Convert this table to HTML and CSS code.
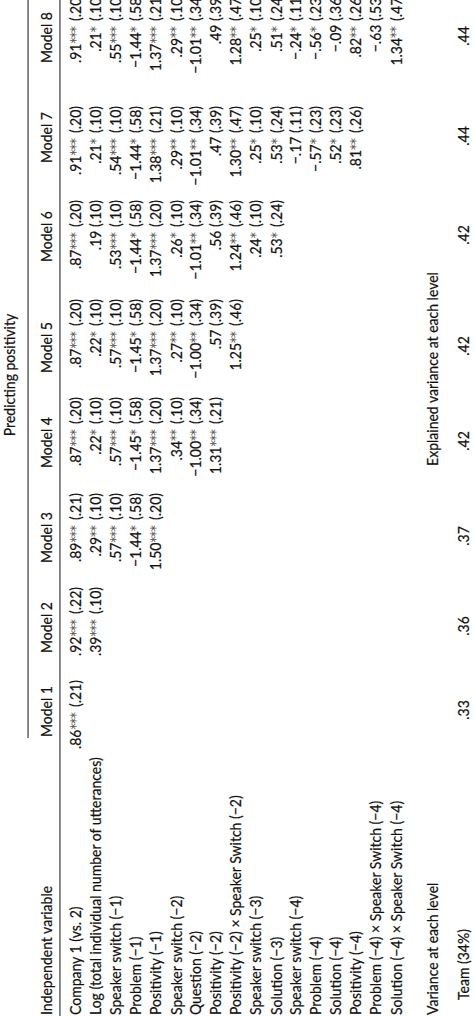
FILE: index.html
```html
<!DOCTYPE html>
<html lang="en">
<head>
<meta charset="utf-8">
<title>Predicting positivity</title>
<link rel="stylesheet" href="styles.css">
</head>
<body>
<div class="page">
  <div class="table">
    <div class="row title-row">
      <div class="label"></div>
      <div class="span-title">Predicting positivity</div>
    </div>
    <div class="row head-row">
      <div class="label">Independent variable</div>
      <div class="hd">Model 1</div>
      <div class="hd">Model 2</div>
      <div class="hd">Model 3</div>
      <div class="hd">Model 4</div>
      <div class="hd">Model 5</div>
      <div class="hd">Model 6</div>
      <div class="hd">Model 7</div>
      <div class="hd">Model 8</div>
    </div>
    <div class="body">
      <div class="row data">
        <div class="label">Company 1 (vs. 2)</div>
        <div class="v">.86<span class="st">***</span> (.21)</div>
        <div class="v">.92<span class="st">***</span> (.22)</div>
        <div class="v">.89<span class="st">***</span> (.21)</div>
        <div class="v">.87<span class="st">***</span> (.20)</div>
        <div class="v">.87<span class="st">***</span> (.20)</div>
        <div class="v">.87<span class="st">***</span> (.20)</div>
        <div class="v">.91<span class="st">***</span> (.20)</div>
        <div class="v">.91<span class="st">***</span> (.20)</div>
      </div>
      <div class="row data">
        <div class="label">Log (total individual number of utterances)</div>
        <div class="v"></div>
        <div class="v">.39<span class="st">***</span> (.10)</div>
        <div class="v">.29<span class="st">**</span> (.10)</div>
        <div class="v">.22<span class="st">*</span> (.10)</div>
        <div class="v">.22<span class="st">*</span> (.10)</div>
        <div class="v">.19 (.10)</div>
        <div class="v">.21<span class="st">*</span> (.10)</div>
        <div class="v">.21<span class="st">*</span> (.10)</div>
      </div>
      <div class="row data">
        <div class="label">Speaker switch (−1)</div>
        <div class="v"></div>
        <div class="v"></div>
        <div class="v">.57<span class="st">***</span> (.10)</div>
        <div class="v">.57<span class="st">***</span> (.10)</div>
        <div class="v">.57<span class="st">***</span> (.10)</div>
        <div class="v">.53<span class="st">***</span> (.10)</div>
        <div class="v">.54<span class="st">***</span> (.10)</div>
        <div class="v">.55<span class="st">***</span> (.10)</div>
      </div>
      <div class="row data">
        <div class="label">Problem (−1)</div>
        <div class="v"></div>
        <div class="v"></div>
        <div class="v">−1.44<span class="st">*</span> (.58)</div>
        <div class="v">−1.45<span class="st">*</span> (.58)</div>
        <div class="v">−1.45<span class="st">*</span> (.58)</div>
        <div class="v">−1.44<span class="st">*</span> (.58)</div>
        <div class="v">−1.44<span class="st">*</span> (.58)</div>
        <div class="v">−1.44<span class="st">*</span> (.58)</div>
      </div>
      <div class="row data">
        <div class="label">Positivity (−1)</div>
        <div class="v"></div>
        <div class="v"></div>
        <div class="v">1.50<span class="st">***</span> (.20)</div>
        <div class="v">1.37<span class="st">***</span> (.20)</div>
        <div class="v">1.37<span class="st">***</span> (.20)</div>
        <div class="v">1.37<span class="st">***</span> (.20)</div>
        <div class="v">1.38<span class="st">***</span> (.21)</div>
        <div class="v">1.37<span class="st">***</span> (.21)</div>
      </div>
      <div class="row data">
        <div class="label">Speaker switch (−2)</div>
        <div class="v"></div>
        <div class="v"></div>
        <div class="v"></div>
        <div class="v">.34<span class="st">**</span> (.10)</div>
        <div class="v">.27<span class="st">**</span> (.10)</div>
        <div class="v">.26<span class="st">*</span> (.10)</div>
        <div class="v">.29<span class="st">**</span> (.10)</div>
        <div class="v">.29<span class="st">**</span> (.10)</div>
      </div>
      <div class="row data">
        <div class="label">Question (−2)</div>
        <div class="v"></div>
        <div class="v"></div>
        <div class="v"></div>
        <div class="v">−1.00<span class="st">**</span> (.34)</div>
        <div class="v">−1.00<span class="st">**</span> (.34)</div>
        <div class="v">−1.01<span class="st">**</span> (.34)</div>
        <div class="v">−1.01<span class="st">**</span> (.34)</div>
        <div class="v">−1.01<span class="st">**</span> (.34)</div>
      </div>
      <div class="row data">
        <div class="label">Positivity (−2)</div>
        <div class="v"></div>
        <div class="v"></div>
        <div class="v"></div>
        <div class="v">1.31<span class="st">***</span> (.21)</div>
        <div class="v">.57 (.39)</div>
        <div class="v">.56 (.39)</div>
        <div class="v">.47 (.39)</div>
        <div class="v">.49 (.39)</div>
      </div>
      <div class="row data">
        <div class="label">Positivity (−2) × Speaker Switch (−2)</div>
        <div class="v"></div>
        <div class="v"></div>
        <div class="v"></div>
        <div class="v"></div>
        <div class="v">1.25<span class="st">**</span> (.46)</div>
        <div class="v">1.24<span class="st">**</span> (.46)</div>
        <div class="v">1.30<span class="st">**</span> (.47)</div>
        <div class="v">1.28<span class="st">**</span> (.47)</div>
      </div>
      <div class="row data">
        <div class="label">Speaker switch (−3)</div>
        <div class="v"></div>
        <div class="v"></div>
        <div class="v"></div>
        <div class="v"></div>
        <div class="v"></div>
        <div class="v">.24<span class="st">*</span> (.10)</div>
        <div class="v">.25<span class="st">*</span> (.10)</div>
        <div class="v">.25<span class="st">*</span> (.10)</div>
      </div>
      <div class="row data">
        <div class="label">Solution (−3)</div>
        <div class="v"></div>
        <div class="v"></div>
        <div class="v"></div>
        <div class="v"></div>
        <div class="v"></div>
        <div class="v">.53<span class="st">*</span> (.24)</div>
        <div class="v">.53<span class="st">*</span> (.24)</div>
        <div class="v">.51<span class="st">*</span> (.24)</div>
      </div>
      <div class="row data">
        <div class="label">Speaker switch (−4)</div>
        <div class="v"></div>
        <div class="v"></div>
        <div class="v"></div>
        <div class="v"></div>
        <div class="v"></div>
        <div class="v"></div>
        <div class="v">−.17 (.11)</div>
        <div class="v">−.24<span class="st">*</span> (.11)</div>
      </div>
      <div class="row data">
        <div class="label">Problem (−4)</div>
        <div class="v"></div>
        <div class="v"></div>
        <div class="v"></div>
        <div class="v"></div>
        <div class="v"></div>
        <div class="v"></div>
        <div class="v">−.57<span class="st">*</span> (.23)</div>
        <div class="v">−.56<span class="st">*</span> (.23)</div>
      </div>
      <div class="row data">
        <div class="label">Solution (−4)</div>
        <div class="v"></div>
        <div class="v"></div>
        <div class="v"></div>
        <div class="v"></div>
        <div class="v"></div>
        <div class="v"></div>
        <div class="v">.52<span class="st">*</span> (.23)</div>
        <div class="v">−.09 (.36)</div>
      </div>
      <div class="row data">
        <div class="label">Positivity (−4)</div>
        <div class="v"></div>
        <div class="v"></div>
        <div class="v"></div>
        <div class="v"></div>
        <div class="v"></div>
        <div class="v"></div>
        <div class="v">.81<span class="st">**</span> (.26)</div>
        <div class="v">.82<span class="st">**</span> (.26)</div>
      </div>
      <div class="row data">
        <div class="label">Problem (−4) × Speaker Switch (−4)</div>
        <div class="v"></div>
        <div class="v"></div>
        <div class="v"></div>
        <div class="v"></div>
        <div class="v"></div>
        <div class="v"></div>
        <div class="v"></div>
        <div class="v">−.63 (.53)</div>
      </div>
      <div class="row data">
        <div class="label">Solution (−4) × Speaker Switch (−4)</div>
        <div class="v"></div>
        <div class="v"></div>
        <div class="v"></div>
        <div class="v"></div>
        <div class="v"></div>
        <div class="v"></div>
        <div class="v"></div>
        <div class="v">1.34<span class="st">**</span> (.47)</div>
      </div>
    </div>
    <div class="row var-row">
      <div class="label">Variance at each level</div>
      <div class="span-sub">Explained variance at each level</div>
    </div>
    <div class="row team-row">
      <div class="label indent">Team (34%)</div>
      <div class="bv">.33</div>
      <div class="bv">.36</div>
      <div class="bv">.37</div>
      <div class="bv">.42</div>
      <div class="bv">.42</div>
      <div class="bv">.42</div>
      <div class="bv">.44</div>
      <div class="bv">.44</div>
    </div>
  </div>
</div>
</body>
</html>
```

FILE: styles.css
```css
html, body {
  margin: 0;
  padding: 0;
  background: #ffffff;
  overflow: hidden;
}

body {
  width: 474px;
  height: 1016px;
  font-family: "Lato", "Open Sans", "DejaVu Sans", sans-serif;
  font-size: 14px;
  color: #111111;
}

/* the printed table is set sideways (rotated 90° counter-clockwise)
   and its glyphs are slightly stretched across the rows */
.page {
  width: 1016px;
  height: 431px;
  transform-origin: 0 0;
  transform: translateY(1016px) rotate(-90deg) scaleY(1.1);
  overflow: hidden;
}

.table {
  width: 1022px;
  display: flex;
  flex-direction: column;
  -webkit-text-stroke: 0.2px #111111;
}

.row {
  display: grid;
  grid-template-columns: 250px 86px 93px 94px 96px 98px 99px 94px 112px;
  line-height: 18.18px;
  white-space: nowrap;
}

.label {
  padding-left: 1px;
}

.indent {
  padding-left: 16px;
}

/* spanning title over the model columns */
.title-row {
  height: 24.5px;
}

.span-title {
  grid-column: 2 / -1;
  margin-left: 28px;
  padding-right: 18px;
  text-align: center;
  border-bottom: 1px solid #2a2a2a;
  height: 24.5px;
}

.head-row {
  padding-top: 8.1px;
  padding-bottom: 3.7px;
  border-bottom: 1.3px solid #2a2a2a;
}

.row > :nth-child(2) { --hl: 29px; }
.row > :nth-child(3) { --hl: 27px; }
.row > :nth-child(4) { --hl: 24px; }
.row > :nth-child(5) { --hl: 25px; }
.row > :nth-child(6) { --hl: 24px; }
.row > :nth-child(7) { --hl: 37px; }
.row > :nth-child(8) { --hl: 37px; }
.row > :nth-child(9) { --hl: 43px; }

.hd {
  text-align: left;
  padding-left: var(--hl);
}

.body {
  padding-top: 4.2px;
}

.v {
  display: flex;
  justify-content: flex-end;
  white-space: pre;
}

.st {
  font-family: "DejaVu Sans", sans-serif;
  font-size: 12.5px;
  color: #555555;
  -webkit-text-stroke: 0;
  letter-spacing: -0.6px;
  margin-right: 2px;
}

.var-row {
  margin-top: 15.4px;
}

.span-sub {
  grid-column: 2 / -1;
  margin-left: 28px;
  padding-right: 6px;
  text-align: center;
}

.team-row {
  margin-top: 10px;
}

.bv {
  margin-left: var(--hl);
  width: 54px;
  text-align: center;
}
```
